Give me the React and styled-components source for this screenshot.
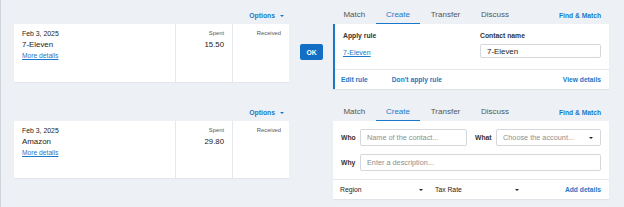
import styled, { createGlobalStyle } from 'styled-components'

const GlobalStyle = createGlobalStyle`
  * { box-sizing: border-box; }
  html, body { margin: 0; padding: 0; }
  body {
    background: #edf1f5;
    font-family: "Liberation Sans", Arial, sans-serif;
    color: #222;
  }
`

const BLUE = '#1a78c8'

const Page = styled.div`
  min-height: 207px;
  border-left: 1px solid #cfd5db;
  padding: 8px 0 0 13px;
  display: flex;
  flex-direction: column;
  gap: 16px;
`

const Row = styled.div`
  display: flex;
  align-items: flex-start;
`

const LeftCol = styled.div`
  width: 275px;
  display: flex;
  flex-direction: column;
`

const Header = styled.div`
  height: 16px;
  display: flex;
  align-items: center;
  justify-content: ${p => p.$between ? 'space-between' : 'flex-end'};
  padding-bottom: 1px;
`

const OptionsLink = styled.a`
  display: flex;
  align-items: center;
  gap: 5px;
  padding-right: 5px;
  font-size: 6.8px;
  font-weight: bold;
  color: ${BLUE};
  cursor: pointer;
`

const Caret = styled.span`
  width: 0;
  height: 0;
  border-left: ${p => p.$size || 2.5}px solid transparent;
  border-right: ${p => p.$size || 2.5}px solid transparent;
  border-top: ${p => (p.$size || 2.5) * 1.1}px solid ${p => p.$color || '#222'};
`

const Card = styled.div`
  height: ${p => p.$h}px;
  display: grid;
  grid-template-columns: 161px 56px 56px;
  gap: 1px;
  background: #e6e9ec;
  box-shadow: 0 1px 1px rgba(0, 0, 0, 0.04);
`

const Cell = styled.div`
  background: #fff;
  padding: 5px 8px 0;
  display: flex;
  flex-direction: column;
  align-items: ${p => p.$right ? 'flex-end' : 'flex-start'};
`

const DateText = styled.div`
  font-size: 6.9px;
  line-height: 10px;
`

const Payee = styled.div`
  font-size: 7.9px;
  line-height: 12px;
`

const SmallLink = styled.a`
  font-size: 6.7px;
  line-height: 9px;
  color: ${BLUE};
  text-decoration: underline;
`

const ColLabel = styled.div`
  font-size: 5.8px;
  line-height: 8px;
  color: #555;
`

const Amount = styled.div`
  margin-top: 2px;
  font-size: 7.8px;
  line-height: 12px;
`

const Middle = styled.div`
  width: 44px;
  height: 74px;
  padding: 16px 0 0 11px;
  display: flex;
  align-items: center;
`

const OkButton = styled.button`
  width: 23px;
  height: 16px;
  margin-top: -2px;
  padding: 0;
  border: none;
  border-radius: 2px;
  background: #136fc4;
  color: #fff;
  font-family: inherit;
  font-size: 6.8px;
  font-weight: bold;
`

const RightCol = styled.div`
  width: 276px;
  display: flex;
  flex-direction: column;
`

const Tabs = styled.div`
  display: flex;
  height: 16px;
`

const Tab = styled.div`
  padding: 0 10.4px;
  display: flex;
  align-items: center;
  padding-bottom: 1px;
  font-size: 8px;
  color: ${p => p.$active ? BLUE : '#555'};
  border-bottom: 2px solid ${p => p.$active ? BLUE : 'transparent'};
  margin-bottom: -1px;
`

const FindMatch = styled.a`
  padding-right: 8px;
  font-size: 6.7px;
  font-weight: bold;
  color: ${BLUE};
`

const Panel = styled.div`
  background: #fff;
  border-left: ${p => p.$rule ? `2px solid ${BLUE}` : 'none'};
  box-shadow: 0 1px 1px rgba(0, 0, 0, 0.05);
`

const RuleBody = styled.div`
  display: grid;
  grid-template-columns: 1fr 121px;
  padding: 6px 8px 11px 8px;
`

const FieldCol = styled.div`
  display: flex;
  flex-direction: column;
`

const BoldLabel = styled.div`
  font-size: 6.8px;
  line-height: 12px;
  font-weight: bold;
  color: #333;
`

const RuleLink = styled.a`
  margin-top: 6px;
  font-size: 7px;
  line-height: 10px;
  color: ${BLUE};
  text-decoration: underline;
`

const TextBox = styled.div`
  height: ${p => p.$h || 17}px;
  ${p => p.$w ? `width: ${p.$w}px;` : 'flex: 1;'}
  margin-top: ${p => p.$mt || 0}px;
  border: 1px solid #d4d8dc;
  border-radius: 2px;
  padding: 0 7px 0 6px;
  display: flex;
  align-items: center;
  justify-content: space-between;
  font-size: ${p => p.$placeholder ? 7.3 : 7.9}px;
  color: ${p => p.$placeholder ? '#8a8f94' : '#222'};
  background: #fff;
`

const Footer = styled.div`
  height: 20px;
  border-top: 1px solid #e4e7ea;
  display: flex;
  align-items: center;
  padding: 0 8px 0 ${p => p.$pl}px;
  gap: ${p => p.$gap || 0}px;
`

const FooterLink = styled.a`
  font-size: 6.7px;
  font-weight: bold;
  color: ${BLUE};
  margin-left: ${p => p.$auto ? 'auto' : '0'};
`

const FormBody = styled.div`
  padding: 8px;
  display: flex;
  flex-direction: column;
  gap: 8px;
`

const FormRow = styled.div`
  display: flex;
  align-items: center;
`

const InlineLabel = styled.div`
  width: ${p => p.$w}px;
  margin-left: ${p => p.$ml || 0}px;
  font-size: 6.8px;
  font-weight: bold;
  color: #333;
`

const Select = styled.div`
  width: ${p => p.$w}px;
  display: flex;
  align-items: center;
  justify-content: space-between;
  padding-right: 3px;
  font-size: 6.8px;
  color: #222;
`

function Options() {
  return (
    <Header>
      <OptionsLink>Options <Caret $size={2.4} $color={BLUE} /></OptionsLink>
    </Header>
  )
}

function TabBar() {
  return (
    <Header $between>
      <Tabs>
        <Tab>Match</Tab>
        <Tab $active>Create</Tab>
        <Tab>Transfer</Tab>
        <Tab>Discuss</Tab>
      </Tabs>
      <FindMatch>Find &amp; Match</FindMatch>
    </Header>
  )
}

function Statement({ name, amount, h }) {
  return (
    <Card $h={h}>
      <Cell>
        <DateText>Feb 3, 2025</DateText>
        <Payee>{name}</Payee>
        <SmallLink>More details</SmallLink>
      </Cell>
      <Cell $right>
        <ColLabel>Spent</ColLabel>
        <Amount>{amount}</Amount>
      </Cell>
      <Cell $right>
        <ColLabel>Received</ColLabel>
      </Cell>
    </Card>
  )
}

export default function App() {
  return (
    <>
      <GlobalStyle />
      <Page>
        <Row>
          <LeftCol>
            <Options />
            <Statement name="7-Eleven" amount="15.50" h={58} />
          </LeftCol>
          <Middle>
            <OkButton>OK</OkButton>
          </Middle>
          <RightCol>
            <TabBar />
            <Panel $rule>
              <RuleBody>
                <FieldCol>
                  <BoldLabel>Apply rule</BoldLabel>
                  <RuleLink>7-Eleven</RuleLink>
                </FieldCol>
                <FieldCol>
                  <BoldLabel>Contact name</BoldLabel>
                  <TextBox $mt={2} $h={16}>7-Eleven</TextBox>
                </FieldCol>
              </RuleBody>
              <Footer $pl={6} $gap={24}>
                <FooterLink>Edit rule</FooterLink>
                <FooterLink>Don't apply rule</FooterLink>
                <FooterLink $auto>View details</FooterLink>
              </Footer>
            </Panel>
          </RightCol>
        </Row>
        <Row>
          <LeftCol>
            <Options />
            <Statement name="Amazon" amount="29.80" h={57} />
          </LeftCol>
          <Middle />
          <RightCol>
            <TabBar />
            <Panel>
              <FormBody>
                <FormRow>
                  <InlineLabel $w={19}>Who</InlineLabel>
                  <TextBox $w={107} $placeholder>Name of the contact...</TextBox>
                  <InlineLabel $w={21} $ml={8}>What</InlineLabel>
                  <TextBox $placeholder>
                    Choose the account... <Caret $size={2.6} />
                  </TextBox>
                </FormRow>
                <FormRow>
                  <InlineLabel $w={19}>Why</InlineLabel>
                  <TextBox $placeholder>Enter a description...</TextBox>
                </FormRow>
              </FormBody>
              <Footer $pl={7} $gap={9}>
                <Select $w={86}>Region <Caret $size={2.6} /></Select>
                <Select $w={87}>Tax Rate <Caret $size={2.6} /></Select>
                <FooterLink $auto>Add details</FooterLink>
              </Footer>
            </Panel>
          </RightCol>
        </Row>
      </Page>
    </>
  )
}
